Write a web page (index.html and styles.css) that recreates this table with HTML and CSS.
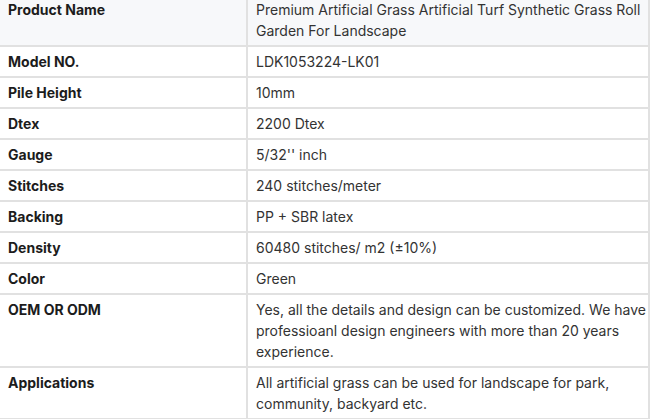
FILE: index.html
```html
<!DOCTYPE html>
<html lang="en">
<head>
<meta charset="utf-8">
<title>Product Specs</title>
<link rel="stylesheet" href="styles.css">
</head>
<body>
<table class="spec">
  <colgroup><col class="c-label"><col class="c-value"></colgroup>
  <tbody>
    <tr class="head"><td class="label">Product Name</td><td class="value">Premium Artificial Grass Artificial Turf Synthetic Grass Roll Garden For Landscape</td></tr>
    <tr><td class="label">Model NO.</td><td class="value">LDK1053224-LK01</td></tr>
    <tr><td class="label">Pile Height</td><td class="value">10mm</td></tr>
    <tr><td class="label">Dtex</td><td class="value">2200 Dtex</td></tr>
    <tr><td class="label">Gauge</td><td class="value">5/32'' inch</td></tr>
    <tr><td class="label">Stitches</td><td class="value">240 stitches/meter</td></tr>
    <tr><td class="label">Backing</td><td class="value">PP + SBR latex</td></tr>
    <tr><td class="label">Density</td><td class="value">60480 stitches/ m2 (±10%)</td></tr>
    <tr><td class="label">Color</td><td class="value">Green</td></tr>
    <tr><td class="label">OEM OR ODM</td><td class="value">Yes, all the details and design can be customized. We have professioanl design engineers with more than 20 years experience.</td></tr>
    <tr><td class="label">Applications</td><td class="value">All artificial grass can be used for landscape for park, community, backyard etc.</td></tr>
  </tbody>
</table>
</body>
</html>
```
FILE: styles.css
```css
html, body {
  margin: 0;
  padding: 0;
  background: #ffffff;
  overflow: hidden;
}
.spec {
  font-family: Inter, "Liberation Sans", sans-serif;
  font-size: 14px;
  line-height: 21px;
  color: #333333;
  border-collapse: separate;
  border-spacing: 0;
  table-layout: fixed;
  width: 652px;
  margin: -7px 0 0 -2px;
  border-right: 2px solid #e1e1e1;
  border-bottom: 2px solid #e1e1e1;
}
.c-label { width: 248px; }
.spec td {
  border-left: 2px solid #e1e1e1;
  border-top: 2px solid #e1e1e1;
  padding: 4px 8px;
  vertical-align: top;
  box-sizing: border-box;
}
.spec td.value {
  padding-right: 0;
}
.spec .label {
  font-weight: 700;
  color: #1c1c1c;
}
.spec .head td {
  background: #f7f8fa;
}
```
